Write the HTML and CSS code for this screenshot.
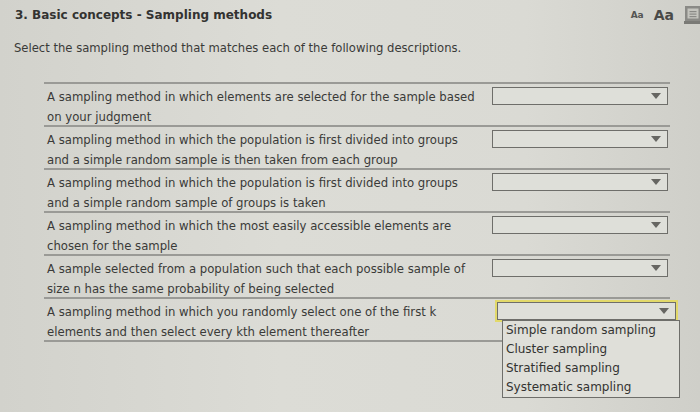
FILE: index.html
```html
<!DOCTYPE html>
<html>
<head>
<meta charset="utf-8">
<link rel="stylesheet" href="styles.css">
</head>
<body>
<div class="page">
  <div class="header">
    <div class="title">3. Basic concepts - Sampling methods</div>
    <div class="tools">
      <span class="aa-small">Aa</span>
      <span class="aa-big">Aa</span>
      <svg class="tool-icon" width="18" height="20" viewBox="0 0 18 20">
        <rect x="1" y="1" width="16" height="15" fill="#8a8a86"/>
        <rect x="3.5" y="3.5" width="11" height="10" fill="#c4c4be"/>
        <rect x="5.5" y="6" width="7" height="1.2" fill="#8a8a86"/>
        <rect x="5.5" y="8.5" width="7" height="1.2" fill="#8a8a86"/>
        <rect x="5.5" y="11" width="7" height="1.2" fill="#8a8a86"/>
        <rect x="0" y="16" width="18" height="3" fill="#7a7a76"/>
      </svg>
    </div>
  </div>
  <p class="intro">Select the sampling method that matches each of the following descriptions.</p>
  <div class="table">
    <div class="row">
      <div class="desc">A sampling method in which elements are selected for the sample based on your judgment</div>
      <div class="select"><span class="arrow"></span></div>
    </div>
    <div class="row">
      <div class="desc">A sampling method in which the population is first divided into groups and a simple random sample is then taken from each group</div>
      <div class="select"><span class="arrow"></span></div>
    </div>
    <div class="row">
      <div class="desc">A sampling method in which the population is first divided into groups and a simple random sample of groups is taken</div>
      <div class="select"><span class="arrow"></span></div>
    </div>
    <div class="row">
      <div class="desc">A sampling method in which the most easily accessible elements are chosen for the sample</div>
      <div class="select"><span class="arrow"></span></div>
    </div>
    <div class="row">
      <div class="desc">A sample selected from a population such that each possible sample of size n has the same probability of being selected</div>
      <div class="select"><span class="arrow"></span></div>
    </div>
    <div class="row last">
      <div class="desc">A sampling method in which you randomly select one of the first k elements and then select every kth element thereafter</div>
      <div class="select-wrap">
        <div class="select open"><span class="arrow"></span></div>
        <ul class="options">
          <li>Simple random sampling</li>
          <li>Cluster sampling</li>
          <li>Stratified sampling</li>
          <li>Systematic sampling</li>
        </ul>
      </div>
    </div>
  </div>
</div>
</body>
</html>
```

FILE: styles.css
```css
html, body {
  margin: 0;
  padding: 0;
}
body {
  width: 700px;
  height: 412px;
  overflow: hidden;
  background: linear-gradient(90deg, #d2d2cc 0%, #dcdcd6 40%, #dadad4 75%, #cfcfc9 100%);
  font-family: "DejaVu Sans", Verdana, sans-serif;
  color: #3a3a38;
}
.header {
  display: flex;
  align-items: center;
  justify-content: space-between;
  padding: 5px 0 0 15px;
  height: 20px;
}
.title {
  font-weight: bold;
  font-size: 12px;
  color: #333331;
}
.tools {
  display: flex;
  align-items: center;
  gap: 10px;
}
.aa-small {
  font-weight: bold;
  font-size: 9px;
  color: #555553;
}
.aa-big {
  font-weight: bold;
  font-size: 14px;
  color: #4a4a48;
}
.tool-icon {
  display: block;
  margin-right: -2px;
}
.intro {
  margin: 15px 0 0 14px;
  font-size: 11.6px;
  line-height: 16px;
}
.table {
  margin: 26px 0 0 44px;
  width: 626px;
  border-bottom: 2px solid #9a9a96;
}
.row {
  display: grid;
  grid-template-columns: 448px 176px;
  height: 41px;
  border-top: 2px solid #9a9a96;
}
.desc {
  font-size: 11.7px;
  line-height: 20px;
  padding: 3px 13px 0 3px;
}
.select {
  position: relative;
  height: 16px;
  margin-top: 3px;
  border: 1px solid #6e6e6a;
  background: #dedfd9;
}
.arrow {
  position: absolute;
  right: 6px;
  top: 5px;
  width: 0;
  height: 0;
  border-left: 5px solid transparent;
  border-right: 5px solid transparent;
  border-top: 6px solid #666662;
}
.select-wrap {
  position: relative;
  margin-left: 5px;
  margin-right: -8px;
}
.select.open {
  outline: 2px solid #e2d96a;
}
.options {
  position: absolute;
  left: 5px;
  right: -4px;
  top: 21px;
  margin: 0;
  padding: 0 3px;
  list-style: none;
  border: 1px solid #6e6e6a;
  background: #dfdfd9;
  font-size: 12px;
  line-height: 19px;
  color: #333331;
}
```
